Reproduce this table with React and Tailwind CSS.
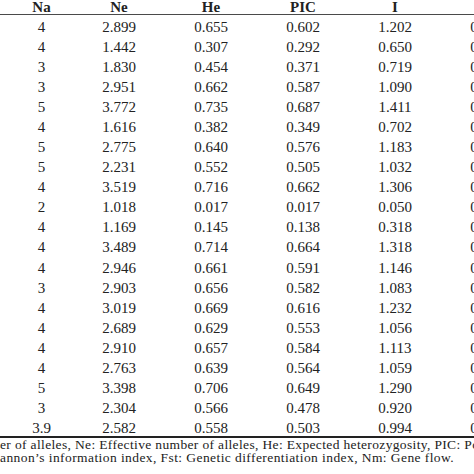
import React from "react";

const rows = [
  ["4", "2.899", "0.655", "0.602", "1.202", "0.052"],
  ["4", "1.442", "0.307", "0.292", "0.650", "0.061"],
  ["3", "1.830", "0.454", "0.371", "0.719", "0.044"],
  ["3", "2.951", "0.662", "0.587", "1.090", "0.038"],
  ["5", "3.772", "0.735", "0.687", "1.411", "0.047"],
  ["4", "1.616", "0.382", "0.349", "0.702", "0.059"],
  ["5", "2.775", "0.640", "0.576", "1.183", "0.041"],
  ["5", "2.231", "0.552", "0.505", "1.032", "0.036"],
  ["4", "3.519", "0.716", "0.662", "1.306", "0.049"],
  ["2", "1.018", "0.017", "0.017", "0.050", "0.012"],
  ["4", "1.169", "0.145", "0.138", "0.318", "0.027"],
  ["4", "3.489", "0.714", "0.664", "1.318", "0.055"],
  ["4", "2.946", "0.661", "0.591", "1.146", "0.043"],
  ["3", "2.903", "0.656", "0.582", "1.083", "0.039"],
  ["4", "3.019", "0.669", "0.616", "1.232", "0.046"],
  ["4", "2.689", "0.629", "0.553", "1.056", "0.051"],
  ["4", "2.910", "0.657", "0.584", "1.113", "0.040"],
  ["4", "2.763", "0.639", "0.564", "1.059", "0.048"],
  ["5", "3.398", "0.706", "0.649", "1.290", "0.053"],
  ["3", "2.304", "0.566", "0.478", "0.920", "0.035"],
  ["3.9", "2.582", "0.558", "0.503", "0.994", "0.045"],
];

const headers = ["Na", "Ne", "He", "PIC", "I", "Fst"];

const Row = ({ cells, last }) => (
  <div className={`grid grid-cols-[73px_repeat(5,92px)] ${last ? "h-[17.6px]" : "h-[20.08px]"} leading-[20.08px]`}>
    {cells.map((c, i) => (
      <div key={i} className={`text-center whitespace-nowrap ${i === 0 ? "pl-[10px]" : ""}`}>{c}</div>
    ))}
  </div>
);

export default function App() {
  return (
    <div
      className="w-[474px] h-[474px] overflow-hidden bg-white text-[#222] text-[15px]"
      style={{ fontFamily: '"Liberation Serif", serif' }}
    >
      <div className="w-[553px]">
        <div className="grid grid-cols-[73px_repeat(5,92px)] h-[15px] leading-[14px] font-bold border-b border-[#4a4a4a]">
          {headers.map((h, i) => (
            <div key={h} className={`text-center ${i === 0 ? "pl-[10px]" : ""}`}>{h}</div>
          ))}
        </div>
        <div className="pt-[1.6px] border-b-[2.5px] border-[#222]">
          {rows.map((r, i) => (
            <Row key={i} cells={r} last={i === rows.length - 1} />
          ))}
        </div>
      </div>
      <div className="text-[13.5px] leading-[13.3px] whitespace-nowrap">
        <div className="tracking-[0.35px]">er of alleles, Ne: Effective number of alleles, He: Expected heterozygosity, PIC: Polymorphism</div>
        <div className="tracking-[0.42px]">annon’s information index, Fst: Genetic differentiation index, Nm: Gene flow.</div>
      </div>
    </div>
  );
}
